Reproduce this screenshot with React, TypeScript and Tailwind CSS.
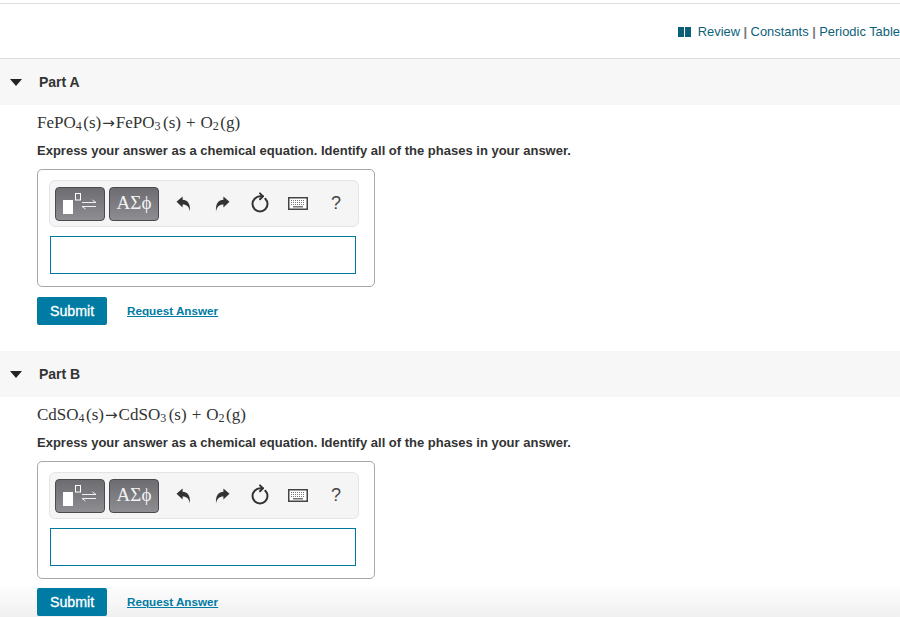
import { RotateCw } from "lucide-react";

const sans = { fontFamily: '"Liberation Sans", Arial, sans-serif' };

function Sub({ children }: { children: React.ReactNode }) {
  return <span className="relative top-[3px] w-[6.5px] text-[12px] leading-none">{children}</span>;
}

function Arrow() {
  return (
    <span className="mx-[1px] text-[15px]" style={{ fontFamily: '"DejaVu Sans", sans-serif' }}>
      →
    </span>
  );
}

function Formula({ metal }: { metal: string }) {
  return (
    <>
      {metal}O<Sub>4</Sub>
      <span className="ml-[1px]">(s)</span>
      <Arrow />
      {metal}O<Sub>3</Sub>
      <span className="ml-[2px]">(s)</span>
      <span className="mx-[5px]">+</span>O<Sub>2</Sub>
      <span className="ml-[1px]">(g)</span>
    </>
  );
}

function TemplatesIcon() {
  return (
    <svg width="40" height="24" viewBox="0 0 40 24" fill="none">
      <rect x="3" y="8" width="10" height="14" fill="#fff" />
      <rect x="15.5" y="1.5" width="5" height="6.5" stroke="#fff" strokeWidth="1" fill="none" />
      <path d="M22 10.5h14l-3.5-2.5M36 14.5H22l3.5 2.5" stroke="#f0f0f2" strokeWidth="1" />
    </svg>
  );
}

function UndoIcon({ flip }: { flip?: boolean }) {
  return (
    <svg width="15" height="16" viewBox="0 0 15 16" className={flip ? "-scale-x-100" : ""}>
      <path
        d="M0.5 5.8L6.6 0.5V3.8C11.2 4 14.5 7 14 15.5C13.2 11 10.8 8.6 6.6 8.6V11.6Z"
        fill="#333"
      />
    </svg>
  );
}

function KeyboardIcon() {
  return (
    <svg width="20" height="13" viewBox="0 0 20 13" fill="none">
      <rect x="0.75" y="0.75" width="18.5" height="11.5" stroke="#444" strokeWidth="1.5" fill="#fff" />
      <path d="M3 3.5h14M3 5.5h14M3 7.5h14" stroke="#777" strokeWidth="1" strokeDasharray="1 1" />
      <path d="M5 9.8h10" stroke="#555" strokeWidth="1.2" />
    </svg>
  );
}

function ToolButton({ children }: { children: React.ReactNode }) {
  return (
    <div className="flex h-[34px] w-[50px] items-center justify-center rounded-[4px] border border-[#4a4a4e] bg-gradient-to-b from-[#6c6c71] to-[#8d8d92]">
      {children}
    </div>
  );
}

function Editor() {
  return (
    <div className="h-[118px] w-[338px] rounded-[5px] border border-[#a8a8a8] bg-white pl-[11px] pt-[10px]">
      <div className="flex h-[47px] w-[310px] items-center rounded-[6px] border border-[#e4e4e4] bg-[#f5f5f5] pl-[5px]">
        <ToolButton>
          <TemplatesIcon />
        </ToolButton>
        <div className="w-1" />
        <ToolButton>
          <span className="text-[19px] text-[#f2f2f2]" style={{ fontFamily: '"Liberation Serif", serif' }}>
            ΑΣϕ
          </span>
        </ToolButton>
        <div className="ml-[12px] flex w-[24px] justify-center">
          <UndoIcon />
        </div>
        <div className="ml-[15px] flex w-[24px] justify-center">
          <UndoIcon flip />
        </div>
        <div className="ml-[14px] flex w-[24px] justify-center">
          <RotateCw size={20} strokeWidth={2.4} color="#333" className="-rotate-45" />
        </div>
        <div className="ml-[14px] flex w-[24px] justify-center">
          <KeyboardIcon />
        </div>
        <div className="ml-[14px] flex w-[24px] justify-center text-[18px] text-[#444]">?</div>
      </div>
      <div className="mt-[9px] ml-[1px] h-[38px] w-[306px] border border-[#00789e] bg-white" />
    </div>
  );
}

function Part({ title, metal, last }: { title: string; metal: string; last?: boolean }) {
  return (
    <section className="h-[292px]">
      <div className="flex h-[46px] items-center bg-[#f7f7f7]">
        <svg width="12" height="7" viewBox="0 0 12 7" className="ml-[10px]">
          <path d="M0 0h12L6 7z" fill="#222" />
        </svg>
        <span className="ml-[17px] text-[14px] font-bold text-[#333]">{title}</span>
      </div>
      <div className="pl-[37px]">
        <p
          className="mt-[6px] flex h-[24px] items-center whitespace-pre text-[17px] text-[#333]"
          style={{ fontFamily: '"Liberation Serif", serif' }}
        >
          <Formula metal={metal} />
        </p>
        <p className="mt-[6px] h-[20px] text-[13px] leading-[20px] font-bold text-[#333]">
          Express your answer as a chemical equation. Identify all of the phases in your answer.
        </p>
        <div className="mt-[8px]">
          <Editor />
        </div>
        <div className={last ? "mt-[9px] flex items-center" : "mt-[10px] flex items-center"}>
          <button className="h-[28px] w-[70px] rounded-[2px] bg-[#007ba3] pt-px text-[14.2px] text-white [-webkit-text-stroke:0.3px_white]">
            Submit
          </button>
          <a className="ml-[20px] text-[11.7px] font-bold text-[#007ba3] underline">Request Answer</a>
        </div>
      </div>
    </section>
  );
}

export default function App() {
  return (
    <div className="relative h-[617px] w-[900px] overflow-hidden bg-white" style={sans}>
      <div className="absolute inset-x-0 bottom-0 h-[34px] bg-gradient-to-b from-white to-[#f0f0f0]" />
      <div className="relative">
        <div className="mt-[3px] h-[56px] border-y border-[#dedede] bg-white pt-px">
          <div className="flex h-[54px] items-center justify-end whitespace-nowrap text-[12.9px] text-[#0d5f78]">
            <svg width="13" height="10" viewBox="0 0 13 10" className="mr-[7px]">
              <path d="M0 0h6v10H0zM7 0h6v10H7z" fill="#0d5f78" />
            </svg>
            <span>Review</span>
            <span className="mx-[3.5px] font-bold text-[#777]">|</span>
            <span>Constants</span>
            <span className="mx-[3.5px] font-bold text-[#777]">|</span>
            <span>Periodic Table</span>
          </div>
        </div>
        <Part title="Part A" metal="FeP" />
        <Part title="Part B" metal="CdS" last />
      </div>
    </div>
  );
}
